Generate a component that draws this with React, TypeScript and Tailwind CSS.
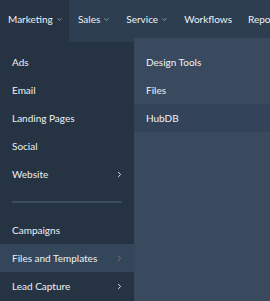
import { ChevronDown, ChevronRight } from 'lucide-react';

const navItems = [
  { label: 'Sales', caret: true },
  { label: 'Service', caret: true },
  { label: 'Workflows', caret: false },
  { label: 'Reports', caret: false },
];

const primary = ['Ads', 'Email', 'Landing Pages', 'Social'];

function MenuRow({ label, arrow, active }: { label: string; arrow?: boolean; active?: boolean }) {
  return (
    <div
      className={`flex h-[28px] items-center justify-between pl-3 pr-[10px] ${active ? 'bg-[#33465a]' : ''}`}
    >
      <span>{label}</span>
      {arrow && (
        <ChevronRight
          className={`h-[9px] w-[9px] ${active ? 'text-[#8e6f82]' : 'text-[#dfe5eb]'}`}
          strokeWidth={2.5}
        />
      )}
    </div>
  );
}

export default function App() {
  return (
    <div
      className="flex h-[301px] w-[270px] flex-col overflow-hidden bg-[#3a4a5e] text-[10px] font-normal text-[#eef2f6]"
      style={{ fontFamily: 'Lato, "Noto Sans", sans-serif' }}
    >
      {/* Top navigation */}
      <div className="flex h-[38px] shrink-0 items-center bg-[#2d3e50] whitespace-nowrap">
        <div className="flex h-full w-[69px] shrink-0 items-center gap-[3px] bg-[#253342] pl-2">
          <span>Marketing</span>
          <ChevronDown className="h-[7px] w-[7px] text-[#aab5c1]" strokeWidth={2.5} />
        </div>
        <div className="flex items-center pl-[9px]">
          {navItems.map((item) => (
            <div key={item.label} className="mr-[16px] flex items-center gap-[3px]">
              <span>{item.label}</span>
              {item.caret && (
                <ChevronDown className="h-[7px] w-[7px] text-[#aab5c1]" strokeWidth={2.5} />
              )}
            </div>
          ))}
        </div>
      </div>

      <div className="flex flex-1">
        {/* Marketing dropdown */}
        <div className="flex w-[134px] shrink-0 flex-col bg-[#253342]">
          <div className="flex h-[4px]">
            <div className="w-[69px]" />
            <div className="flex-1 bg-[#2d3e50]" />
          </div>
          <div className="pt-[6px]">
            {primary.map((label) => (
              <MenuRow key={label} label={label} />
            ))}
            <MenuRow label="Website" arrow />
            <div className="flex h-[28px] items-center px-3">
              <div className="h-[2px] w-full rounded bg-[#3a4b5e]" />
            </div>
            <MenuRow label="Campaigns" />
            <MenuRow label="Files and Templates" arrow active />
            <MenuRow label="Lead Capture" arrow />
          </div>
        </div>

        {/* Submenu */}
        <div className="flex-1 pt-[10px]">
          <div className="flex h-[28px] items-center pl-3">Design Tools</div>
          <div className="flex h-[28px] items-center pl-3">Files</div>
          <div className="flex h-[28px] items-center bg-[#33445a] pl-3">HubDB</div>
        </div>
      </div>
    </div>
  );
}
